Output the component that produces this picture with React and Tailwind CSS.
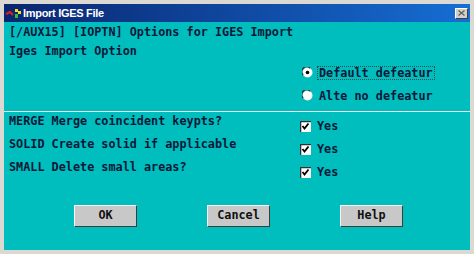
import React from 'react';

const mono = { fontFamily: '"DejaVu Sans Mono", "Liberation Mono", monospace' };

const Radio = ({ checked }) => (
  <svg width="11" height="11" viewBox="0 0 11 11" className="shrink-0">
    <circle cx="5.5" cy="5.5" r="5" fill="#ffffff" />
    <path d="M1.2 8 A4.7 4.7 0 0 1 8 1.2" stroke="#3a3a3a" strokeWidth="1.4" fill="none" />
    {checked && <circle cx="5.5" cy="5.5" r="1.8" fill="#000000" />}
  </svg>
);

const Check = () => (
  <svg width="11" height="11" viewBox="0 0 11 11" className="shrink-0">
    <rect x="0" y="0" width="11" height="11" fill="#ffffff" />
    <path d="M0.5 11 V0.5 H11" stroke="#303030" strokeWidth="1.6" fill="none" />
    <path d="M2.5 5 L4.5 7.5 L8.5 2.5" stroke="#000000" strokeWidth="1.8" fill="none" />
  </svg>
);

const Button = ({ children }) => (
  <button className="w-[63px] h-[22px] bg-[#c8c8c8] border border-t-white border-l-white border-b-[#3c3c3c] border-r-[#3c3c3c] text-[#101010] font-bold text-[11.8px] leading-none">
    {children}
  </button>
);

const rows = [
  'MERGE Merge coincident keypts?',
  'SOLID Create solid if applicable',
  'SMALL Delete small areas?',
];

export default function App() {
  return (
    <div className="w-[474px] h-[254px] bg-[#dcd9d2] pt-[4px] pl-[4px] pr-[4px] pb-[4px] flex flex-col">
      <div className="h-[18px] shrink-0 bg-gradient-to-r from-[#0a2570] to-[#166ed4] flex items-center pl-[1px] pr-[2px]">
        <svg width="17" height="11" viewBox="0 0 17 11" className="shrink-0">
          <path d="M1 6 L5 4 L8 7" stroke="#e02020" strokeWidth="2" fill="none" />
          <rect x="10" y="1" width="3" height="3" fill="#f0e020" />
          <rect x="10" y="6" width="3" height="4" fill="#30c030" />
          <rect x="13" y="3" width="3" height="3" fill="#f0e020" />
        </svg>
        <span className="ml-[1px] text-white font-bold text-[11px] tracking-[-0.3px]" style={{ fontFamily: '"Liberation Sans", Arial, sans-serif' }}>
          Import IGES File
        </span>
        <div className="ml-auto w-[13px] h-[11px] bg-[#d4d0c8] border border-t-white border-l-white border-b-[#404040] border-r-[#404040] flex items-center justify-center">
          <svg width="7" height="6" viewBox="0 0 7 6">
            <path d="M0.5 0.5 L6.5 5.5 M6.5 0.5 L0.5 5.5" stroke="#606060" strokeWidth="1.3" />
          </svg>
        </div>
      </div>

      <div className="flex-1 bg-[#00bebe] flex flex-col text-[#0a1838] font-bold text-[11.8px] leading-[14px]" style={mono}>
        <div className="pt-[3px] pl-[5px]">
          <div className="h-[19px] whitespace-pre">[/AUX15] [IOPTN] Options for IGES Import</div>
          <div className="h-[19px] whitespace-pre">Iges Import Option</div>
        </div>

        <div className="mt-[3px] pl-[298px] flex flex-col">
          <div className="h-[23px] flex items-start gap-[5px]">
            <div className="mt-[1px]"><Radio checked /></div>
            <span className="outline-1 outline-dotted outline-[#2a4a4a] px-[1px] leading-[12px] mt-[1px]">Default defeatur</span>
          </div>
          <div className="h-[22px] flex items-start gap-[6px]">
            <div className="mt-[1px]"><Radio /></div>
            <span>Alte no defeatur</span>
          </div>
        </div>

        <div className="h-px bg-[#f0ecf4]" />

        <div className="mt-[2px] pl-[5px] flex flex-col">
          {rows.map((r) => (
            <div key={r} className="h-[23px] grid grid-cols-[291px_1fr]">
              <span className="whitespace-pre">{r}</span>
              <div className="mt-[5px] flex items-start gap-[6px]">
                <div className="mt-[2px]"><Check /></div>
                <span>Yes</span>
              </div>
            </div>
          ))}
        </div>

        <div className="mt-[22px] pl-[70px] flex gap-[70px]" style={mono}>
          <Button>OK</Button>
          <Button>Cancel</Button>
          <Button>Help</Button>
        </div>
      </div>
    </div>
  );
}
